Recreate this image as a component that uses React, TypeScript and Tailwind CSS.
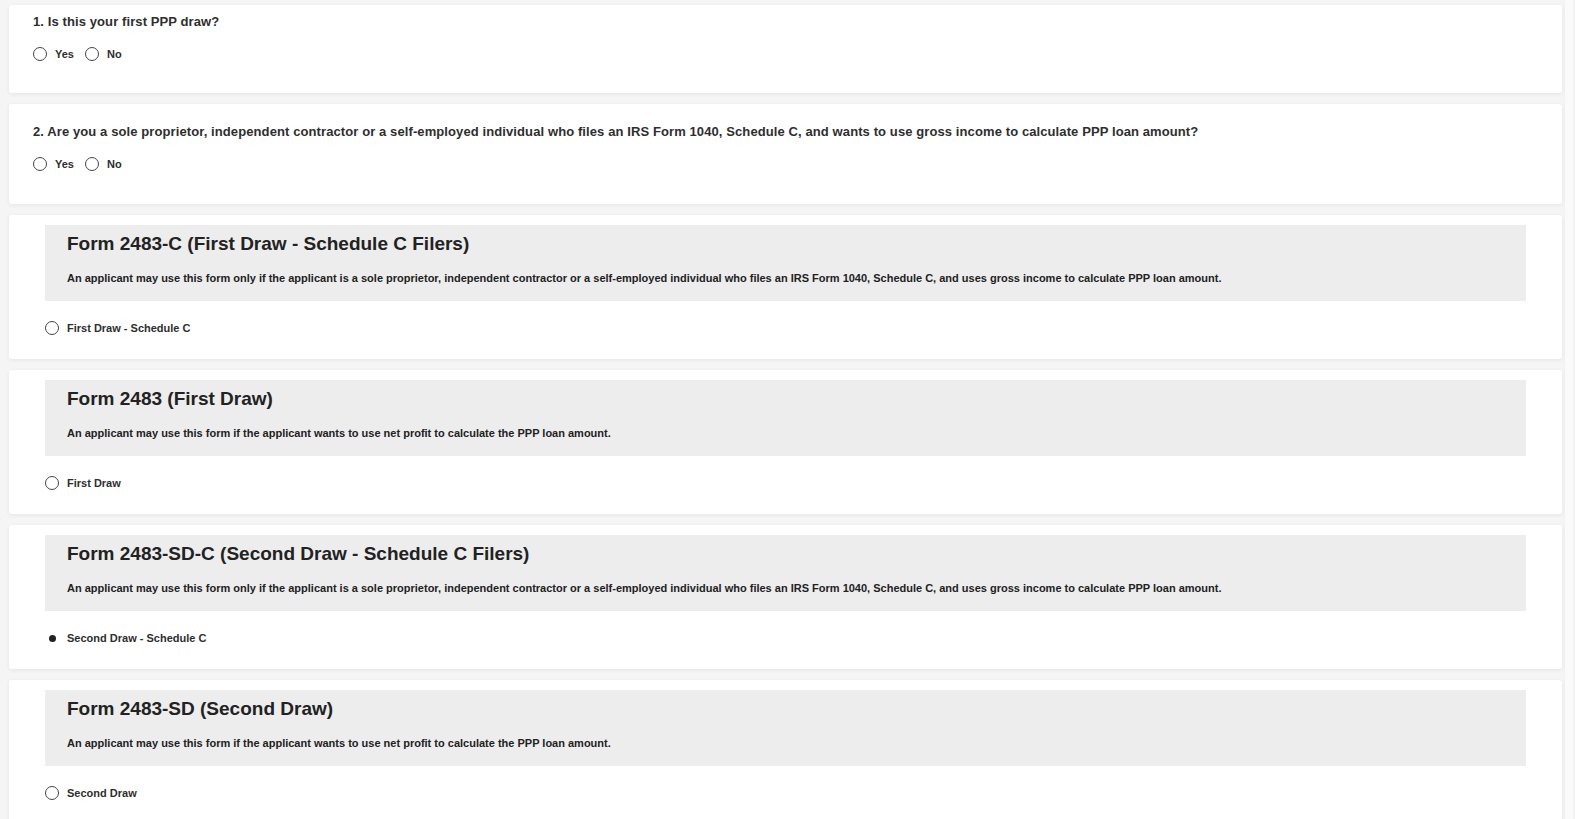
const questions = [
  {
    id: 1,
    text: "1. Is this your first PPP draw?",
  },
  {
    id: 2,
    text: "2. Are you a sole proprietor, independent contractor or a self-employed individual who files an IRS Form 1040, Schedule C, and wants to use gross income to calculate PPP loan amount?",
  },
];

const grossText =
  "An applicant may use this form only if the applicant is a sole proprietor, independent contractor or a self-employed individual who files an IRS Form 1040, Schedule C, and uses gross income to calculate PPP loan amount.";
const netText =
  "An applicant may use this form if the applicant wants to use net profit to calculate the PPP loan amount.";

const forms = [
  { title: "Form 2483-C (First Draw - Schedule C Filers)", desc: grossText, option: "First Draw - Schedule C", checked: false },
  { title: "Form 2483 (First Draw)", desc: netText, option: "First Draw", checked: false },
  { title: "Form 2483-SD-C (Second Draw - Schedule C Filers)", desc: grossText, option: "Second Draw - Schedule C", checked: true },
  { title: "Form 2483-SD (Second Draw)", desc: netText, option: "Second Draw", checked: false },
];

function Radio({ checked = false }: { checked?: boolean }) {
  if (checked) {
    return (
      <span className="flex h-[14px] w-[14px] shrink-0 items-center justify-center">
        <span className="h-[7px] w-[7px] rounded-full bg-[#222]" />
      </span>
    );
  }
  return <span className="h-[14px] w-[14px] shrink-0 rounded-full border-[1.5px] border-[#444] bg-white" />;
}

function Card({ children, className = "" }: { children: React.ReactNode; className?: string }) {
  return (
    <div className={`shrink-0 rounded-[3px] bg-white shadow-[0_1px_4px_rgba(0,0,0,0.07)] ${className}`}>
      {children}
    </div>
  );
}

export default function App() {
  return (
    <div
      className="flex h-[819px] w-full overflow-hidden bg-[#f5f5f5] text-[#2e2e2e]"
      style={{ fontFamily: '"Liberation Sans", Arial, sans-serif' }}
    >
      <div className="flex flex-1 flex-col gap-[11px] pl-[9px] pt-[5px]">
        {questions.map((q, i) => (
          <Card key={q.id} className={i === 0 ? "h-[88px] px-[24px] pt-[9px]" : "h-[100px] px-[24px] pt-[20px]"}>
            <p className="text-[13px] font-bold leading-[16px] tracking-[0.1px]">{q.text}</p>
            <div className="mt-[16px] flex items-center text-[11px] font-bold">
              <label className="flex items-center gap-[8px]">
                <Radio />
                <span>Yes</span>
              </label>
              <label className="ml-[11px] flex items-center gap-[8px]">
                <Radio />
                <span>No</span>
              </label>
            </div>
          </Card>
        ))}

        {forms.map((f) => (
          <Card key={f.title} className="h-[144px] pt-[10px]">
            <div className="mx-[36px] h-[76px] bg-[#ededed] px-[22px] pt-[8px]">
              <h2 className="text-[19px] font-bold leading-[22px] text-[#222]">{f.title}</h2>
              <p className="mt-[16px] text-[11px] font-bold leading-[14px] text-[#222]">{f.desc}</p>
            </div>
            <label className="ml-[36px] mt-[19px] flex items-center gap-[8px] text-[11px] font-bold">
              <Radio checked={f.checked} />
              <span>{f.option}</span>
            </label>
          </Card>
        ))}
      </div>
      <div className="ml-[3px] mr-[2px] w-[8px] bg-[#fafafa] shadow-[0_0_3px_rgba(0,0,0,0.05)]" />
    </div>
  );
}
